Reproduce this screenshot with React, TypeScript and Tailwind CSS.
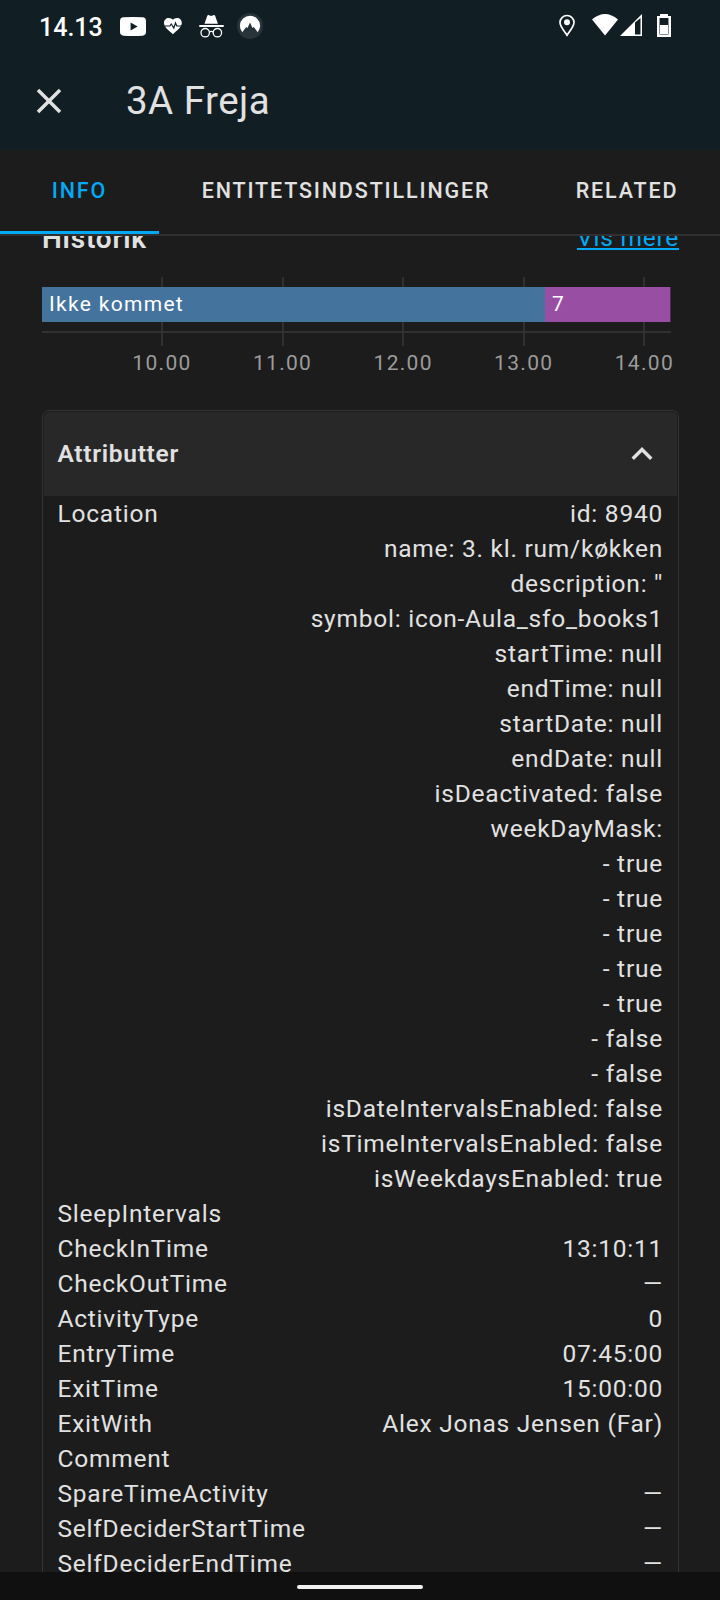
import React from "react";

const locationLines = [
  "id: 8940",
  "name: 3. kl. rum/køkken",
  "description: ''",
  "symbol: icon-Aula_sfo_books1",
  "startTime: null",
  "endTime: null",
  "startDate: null",
  "endDate: null",
  "isDeactivated: false",
  "weekDayMask:",
  "- true",
  "- true",
  "- true",
  "- true",
  "- true",
  "- false",
  "- false",
  "isDateIntervalsEnabled: false",
  "isTimeIntervalsEnabled: false",
  "isWeekdaysEnabled: true",
];

const attributes: { name: string; lines: string[] }[] = [
  { name: "Location", lines: locationLines },
  { name: "SleepIntervals", lines: [] },
  { name: "CheckInTime", lines: ["13:10:11"] },
  { name: "CheckOutTime", lines: ["—"] },
  { name: "ActivityType", lines: ["0"] },
  { name: "EntryTime", lines: ["07:45:00"] },
  { name: "ExitTime", lines: ["15:00:00"] },
  { name: "ExitWith", lines: ["Alex Jonas Jensen (Far)"] },
  { name: "Comment", lines: [] },
  { name: "SpareTimeActivity", lines: ["—"] },
  { name: "SelfDeciderStartTime", lines: ["—"] },
  { name: "SelfDeciderEndTime", lines: ["—"] },
];

const hours = ["10.00", "11.00", "12.00", "13.00", "14.00"];

function LeftStatusIcons() {
  return (
    <svg width="155" height="40" viewBox="115 5 155 40" className="mt-[5px]" fill="#fff">
      <path fillRule="evenodd" d="M123.500 17.300Q133 16.700 142.500 17.300Q146 17.600 146 21V32Q146 35.400 142.500 35.700Q133 36.300 123.500 35.700Q120 35.400 120 32V21Q120 17.600 123.500 17.300ZM130.600 22.600V30.400L137.600 26.500Z" />
      <path d="M172.900 34.300l-1.300-1.200C166.900 29 164 26.300 164 22.800c0-2.800 2.100-4.900 4.800-4.900 1.600 0 3.100.7 4.100 1.900 1-1.200 2.500-1.900 4.100-1.900 2.700 0 4.800 2.100 4.800 4.900 0 3.500-3 6.200-7.600 10.300Z" />
      <path d="M164.500 26h5.300l1.500-2 2.500 4 1.700-5 1.300 3h5" fill="none" stroke="#111e24" strokeWidth="1.200" />
      <path d="M204.500 23.800l2.600-7.600q.5-1.600 2-1l2.100.8 2.100-.8q1.500-.6 2 1l2.600 7.600zM199.300 25h24.400v2h-24.400z" />
      <g fill="none" stroke="#fff" strokeWidth="1.300">
        <circle cx="205.200" cy="32.700" r="4.200" />
        <circle cx="217.400" cy="32.700" r="4.200" />
        <path d="M209.300 32q2-1.200 4 0" />
      </g>
      <circle cx="250" cy="26" r="13" fill="#28343a" />
      <path d="M242.300 32.300a10.100 10.100 0 1 1 15.400 0l-3.900-5.300-1.300 1-2.500-5.500-2.500 5.500-1.300-1Z" />
    </svg>
  );
}

function RightStatusIcons() {
  return (
    <svg width="130" height="40" viewBox="550 5 130 40" fill="#fff">
      <path d="M567 35.200c-3.500-5-7-9-7-12.700a7 7 0 0 1 14 0c0 3.700-3.500 7.700-7 12.700Z" fill="none" stroke="#fff" strokeWidth="1.700" />
      <circle cx="567" cy="22.300" r="3" />
      <path d="M592 19.500q13-11 26 0L605 35.500Z" />
      <path fillRule="evenodd" d="M620 36L642 14V36ZM635 22.500V34.500H640.500V18Z" />
      <path fillRule="evenodd" d="M660 14h8v2h3v21h-14V16h3ZM659.500 18v16.500h9V18Z" />
      <path d="M660 25h8v9h-8z" />
    </svg>
  );
}

function Header() {
  return (
    <header className="h-[150px] shrink-0 bg-[#111e24]">
      <div className="flex h-[51px] items-start justify-between pr-10">
        <div className="flex items-start pl-[39px]">
          <span className="mt-[13px] w-[76px] text-[25px] font-medium leading-[30px] text-white">14.13</span>
          <LeftStatusIcons />
        </div>
        <div className="pt-[5px]"><RightStatusIcons /></div>
      </div>
      <div className="flex h-[98px] items-center">
        <svg width="42" height="42" viewBox="0 0 24 24" className="ml-7 mt-0.5 shrink-0" fill="#e1e1e1">
          <path d="M19 6.410 17.590 5 12 10.590 6.410 5 5 6.410 10.590 12 5 17.590 6.410 19 12 13.410 17.590 19 19 17.590 13.410 12Z" />
        </svg>
        <h1 className="ml-14 mt-0.5 text-[38.5px] leading-[50px] tracking-[0.48px]">3A Freja</h1>
      </div>
    </header>
  );
}

function Tabs() {
  return (
    <nav className="flex h-[86px] shrink-0 border-b-2 border-[#303030] text-[21.5px] font-medium leading-8 tracking-[1.85px]">
      <div className="flex w-[159px] justify-center border-b-[3px] border-[#03a9f4] pt-[25px] text-[#03a9f4]">INFO</div>
      <div className="flex w-[374px] justify-center pt-[25px]">ENTITETSINDSTILLINGER</div>
      <div className="flex flex-1 justify-center pt-[25px] pl-px">RELATED</div>
    </nav>
  );
}

function HistoryChart() {
  return (
    <div className="mt-[23px] w-[629px]">
      <div className="grid h-[69px]">
        <svg width="629" height="69" className="col-start-1 row-start-1" fill="#303030">
          <path d="M119 0h2v69h-2zM240 0h2v69h-2zM360 0h2v69h-2zM481 0h2v69h-2zM601 0h2v69h-2zM0 54h629v2H0z" />
        </svg>
        <div className="col-start-1 row-start-1 mt-[10px] flex h-[35px] text-[21px] leading-[34px] tracking-[1.31px] text-white">
          <div className="w-[503px] bg-[#44739e] pl-[7px]">Ikke kommet</div>
          <div className="w-[126px] border-r border-[#4a2f50] bg-[#984ea3] pl-[7px]">7</div>
        </div>
      </div>
      <div className="ml-[59.7px] flex w-[603px] pt-[4px] text-[21px] leading-[26px] tracking-[1.31px] text-[#9b9b9b]">
        {hours.map((hour) => (
          <span key={hour} className="w-[120.6px] text-center">{hour}</span>
        ))}
      </div>
    </div>
  );
}

function Attributes() {
  return (
    <section className="mt-[34px] rounded-t-[7px] border border-[#333] text-[24.5px] leading-[35px] tracking-[0.766px]">
      <div className="m-px mb-0 flex h-[84px] items-center justify-between rounded-t-[5px] bg-[#282828] pl-[13.5px] pr-[14px]">
        <h2 className="-mt-0.5 font-semibold tracking-[0.7px]">Attributter</h2>
        <svg width="42" height="42" viewBox="0 0 24 24" fill="#e1e1e1">
          <path d="M7.410 15.410 12 10.830 16.590 15.410 18 14 12 8 6 14Z" />
        </svg>
      </div>
      <dl className="pl-[14.5px] pr-[15px]">
        {attributes.map((attribute) => (
          <div key={attribute.name} className="flex justify-between">
            <dt>{attribute.name}</dt>
            <dd className="text-right">
              {attribute.lines.map((line, index) => (
                <div key={index}>{line}</div>
              ))}
            </dd>
          </div>
        ))}
      </dl>
    </section>
  );
}

export default function App() {
  return (
    <div className="flex h-[1600px] w-[720px] flex-col overflow-hidden bg-[#1c1c1c] font-['Roboto',sans-serif] text-[#e1e1e1]">
      <Header />
      <Tabs />
      <main className="min-h-0 flex-1 overflow-hidden px-[42px] pr-[41px]">
        <div className="-mt-[16px] flex h-[34px] items-start justify-between">
          <h2 className="text-[28px] font-semibold leading-[37px] tracking-[0.8px]">Historik</h2>
          <a className="text-[24.5px] leading-[35px] tracking-[0.766px] text-[#03a9f4] underline decoration-2 underline-offset-2">Vis mere</a>
        </div>
        <HistoryChart />
        <Attributes />
      </main>
      <footer className="flex h-7 shrink-0 justify-center bg-[#101010] pt-[13px]">
        <div className="h-1 w-[126px] rounded-full bg-[#f1f1f1]" />
      </footer>
    </div>
  );
}
